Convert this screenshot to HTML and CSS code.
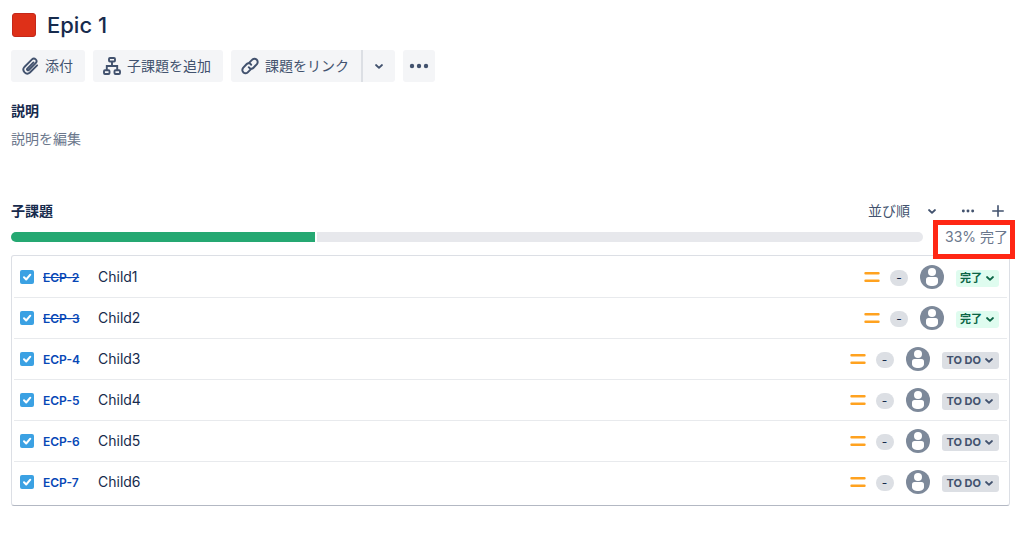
FILE: index.html
```html
<!DOCTYPE html>
<html lang="ja">
<head>
<meta charset="utf-8">
<title>Epic 1</title>
<link rel="stylesheet" href="styles.css">
</head>
<body>
<svg class="sprite" aria-hidden="true">
  <symbol id="chevron" viewBox="0 0 12 12"><path d="M3 5 6 7.800 9 5" fill="none" stroke="currentColor" stroke-width="1.800" stroke-linecap="round" stroke-linejoin="round"/></symbol>
  <symbol id="dots" viewBox="0 0 20 6"><circle cx="3" cy="3" r="2.2"/><circle cx="10" cy="3" r="2.2"/><circle cx="17" cy="3" r="2.2"/></symbol>
  <symbol id="medium" viewBox="0 0 16 12"><path d="M1.500 2.200h13M1.500 9.800h13" stroke="#ffa21f" stroke-width="2.400" stroke-linecap="round"/></symbol>
  <symbol id="person" viewBox="0 0 24 24"><circle cx="12" cy="12" r="12" fill="#7d899a"/><circle cx="12" cy="7" r="4" fill="#fff"/><path d="M6 14.500a2.500 2.500 0 0 1 2.500-2.500h7a2.500 2.500 0 0 1 2.500 2.500v2.500c0 2.800-2.800 4-6 4s-6-1.200-6-4z" fill="#fff"/></symbol>
</svg>
<main class="page">
  <header class="title-row">
    <span class="epic-mark"></span>
    <h1 class="title">Epic 1</h1>
  </header>

  <div class="toolbar">
    <button class="btn" type="button">
      <svg class="btn-icon" viewBox="0 0 18 18"><path d="M12.500 5.400 6.300 11.600a.9.900 0 0 0 1.500 1.400l6.900-6.900a2.600 2.600 0 0 0-3.700-3.700L3.400 10a3.900 3.900 0 0 0 5.500 5.500l7.200-7.200" fill="none" stroke="currentColor" stroke-width="1.900" stroke-linecap="round" stroke-linejoin="round"/></svg>
      添付
    </button>
    <button class="btn" type="button">
      <svg class="btn-icon" viewBox="0 0 18 18" fill="none" stroke="currentColor" stroke-width="1.900"><rect x="6" y="1" width="6" height="3.500" rx="1"/><rect x="1" y="13.200" width="5.500" height="3.800" rx="1"/><rect x="11.500" y="13.200" width="5.500" height="3.800" rx="1"/><path d="M9 4.500V9M3.800 13V9h10.400v4"/></svg>
      子課題を追加
    </button>
    <div class="split">
      <button class="btn split-main" type="button">
        <svg class="btn-icon" viewBox="0 0 18 18" fill="none" stroke="currentColor" stroke-width="2" stroke-linecap="round"><path d="M8.300 5.600 11 2.900a3 3 0 0 1 4.900 4.200l-3.400 3.600a3 3 0 0 1-4.700-.4"/><path d="M9.700 12.400 7 15.100a3 3 0 0 1-4.900-4.200l3.400-3.600a3 3 0 0 1 4.700.4"/></svg>
        課題をリンク
      </button>
      <button class="btn split-more" type="button" aria-label="リンクのオプション"><svg class="chevron"><use href="#chevron"/></svg></button>
    </div>
    <button class="btn icon-btn" type="button" aria-label="その他"><svg class="dots-lg"><use href="#dots"/></svg></button>
  </div>

  <section class="description">
    <h2 class="heading">説明</h2>
    <p class="placeholder">説明を編集</p>
  </section>

  <section class="children">
    <div class="children-head">
      <h2 class="heading">子課題</h2>
      <div class="actions">
        <button class="plain sort" type="button">並び順 <svg class="chevron"><use href="#chevron"/></svg></button>
        <button class="plain" type="button" aria-label="その他の操作"><svg class="dots-sm"><use href="#dots"/></svg></button>
        <button class="plain" type="button" aria-label="子課題を作成"><svg class="plus" viewBox="0 0 12 12"><path d="M6 .8v10.400M.8 6h10.400" stroke="currentColor" stroke-width="1.600" stroke-linecap="round"/></svg></button>
      </div>
    </div>
    <div class="progress-row">
      <div class="progress"><span class="done" style="width:33.3%"></span><span class="rest"></span></div>
      <span class="percent">33% 完了</span>
    </div>

    <ul class="list">
      <li class="row">
        <input class="check" type="checkbox" checked aria-label="ECP-2"><a class="key closed" href="#ecp-2">ECP-2</a><span class="name">Child1</span>
        <svg class="priority"><use href="#medium"/></svg><span class="estimate">-</span><svg class="avatar"><use href="#person"/></svg>
        <button class="status green" type="button">完了<svg class="chevron"><use href="#chevron"/></svg></button>
      </li>
      <li class="row">
        <input class="check" type="checkbox" checked aria-label="ECP-3"><a class="key closed" href="#ecp-3">ECP-3</a><span class="name">Child2</span>
        <svg class="priority"><use href="#medium"/></svg><span class="estimate">-</span><svg class="avatar"><use href="#person"/></svg>
        <button class="status green" type="button">完了<svg class="chevron"><use href="#chevron"/></svg></button>
      </li>
      <li class="row">
        <input class="check" type="checkbox" checked aria-label="ECP-4"><a class="key" href="#ecp-4">ECP-4</a><span class="name">Child3</span>
        <svg class="priority"><use href="#medium"/></svg><span class="estimate">-</span><svg class="avatar"><use href="#person"/></svg>
        <button class="status" type="button">TO DO<svg class="chevron"><use href="#chevron"/></svg></button>
      </li>
      <li class="row">
        <input class="check" type="checkbox" checked aria-label="ECP-5"><a class="key" href="#ecp-5">ECP-5</a><span class="name">Child4</span>
        <svg class="priority"><use href="#medium"/></svg><span class="estimate">-</span><svg class="avatar"><use href="#person"/></svg>
        <button class="status" type="button">TO DO<svg class="chevron"><use href="#chevron"/></svg></button>
      </li>
      <li class="row">
        <input class="check" type="checkbox" checked aria-label="ECP-6"><a class="key" href="#ecp-6">ECP-6</a><span class="name">Child5</span>
        <svg class="priority"><use href="#medium"/></svg><span class="estimate">-</span><svg class="avatar"><use href="#person"/></svg>
        <button class="status" type="button">TO DO<svg class="chevron"><use href="#chevron"/></svg></button>
      </li>
      <li class="row">
        <input class="check" type="checkbox" checked aria-label="ECP-7"><a class="key" href="#ecp-7">ECP-7</a><span class="name">Child6</span>
        <svg class="priority"><use href="#medium"/></svg><span class="estimate">-</span><svg class="avatar"><use href="#person"/></svg>
        <button class="status" type="button">TO DO<svg class="chevron"><use href="#chevron"/></svg></button>
      </li>
    </ul>
  </section>
</main>
</body>
</html>
```
FILE: styles.css
```css
* { box-sizing: border-box; }

body {
  margin: 0;
  background: #fff;
  color: #172b4d;
  font: 14px/20px Inter, "Noto Sans CJK JP", sans-serif;
}

button {
  border: 0;
  font: inherit;
  color: inherit;
  cursor: pointer;
}

svg { flex: none; fill: currentColor; }
.sprite { position: absolute; width: 0; height: 0; }

.page { padding: 10px 26px 32px 11px; }

.title-row {
  display: flex;
  align-items: center;
  gap: 11px;
  height: 30px;
  padding-left: 1px;
}
.epic-mark {
  width: 24px;
  height: 24px;
  border: 1px solid #c4281a;
  border-radius: 3px;
  background: #de3018;
}
.title {
  margin: 0;
  font-size: 22px;
  line-height: 28px;
  font-weight: 500;
}

.toolbar {
  display: flex;
  gap: 8px;
  margin-top: 10px;
  color: #42526e;
}
.btn {
  display: flex;
  align-items: center;
  justify-content: center;
  gap: 6px;
  height: 32px;
  padding: 0 12px 0 10px;
  border-radius: 3px;
  background: #f4f5f7;
}
.btn-icon { width: 18px; height: 18px; fill: none; }
.split { display: flex; }
.split-main { border-radius: 3px 0 0 3px; }
.split-more {
  width: 34px;
  padding: 0;
  border-left: 2px solid #dcdfe4;
  border-radius: 0 3px 3px 0;
}
.icon-btn { width: 32px; padding: 0; }
.chevron { width: 12px; height: 12px; }
.dots-lg { width: 20px; height: 6px; }

.description { margin-top: 19px; }
.heading {
  margin: 0;
  font-size: 14px;
  line-height: 20px;
  font-weight: 700;
}
.placeholder { margin: 8px 0 0; color: #6b778c; }

.children { margin-top: 52px; }
.children-head { display: flex; justify-content: space-between; }
.actions {
  display: flex;
  align-items: center;
  gap: 17px;
  padding-right: 6px;
  color: #42526e;
}
.plain {
  display: flex;
  align-items: center;
  height: 20px;
  padding: 0;
  background: none;
}
.sort { gap: 16px; margin-right: 6px; }
.dots-sm { width: 14px; height: 4px; }
.plus { width: 12px; height: 12px; }

.progress-row {
  display: flex;
  align-items: flex-start;
  gap: 10px;
  height: 34px;
}
.progress {
  display: flex;
  flex: 1;
  gap: 2px;
  height: 10px;
  margin-top: 11px;
  overflow: hidden;
  border-radius: 5px;
}
.done { background: #25a872; }
.rest { flex: 1; background: #e7e8ec; }
.percent {
  z-index: 1;
  height: 39px;
  margin: -1px -5px 0 0;
  padding: 2px 2px 0 7px;
  border: 5px solid #ff2714;
  background: #fff;
  color: #6b778c;
  white-space: nowrap;
}

.list {
  margin: 0;
  padding: 1px 2px 2px;
  border: 1px solid #dcdfe5;
  border-bottom-color: #b3b8c3;
  border-radius: 3px;
  list-style: none;
}
.row {
  display: flex;
  align-items: center;
  height: 41px;
  padding: 0 8px 0 6px;
  border-bottom: 1px solid #e8eaed;
}
.row:last-child { border-bottom-color: transparent; }
.check {
  appearance: none;
  width: 14px;
  height: 14px;
  margin: 0 9px 0 0;
  border-radius: 2px;
  background: #fff;
  border: 1px solid #3ba1e3;
}
.check:checked {
  border: 0;
  background: #3ba1e3 url("data:image/svg+xml,%3Csvg xmlns='http://www.w3.org/2000/svg' viewBox='0 0 14 14'%3E%3Cpath d='M4 7.300 6.200 9.500 10.300 4.700' fill='none' stroke='white' stroke-width='2' stroke-linecap='round' stroke-linejoin='round'/%3E%3C/svg%3E") center / contain;
}
.key {
  width: 55px;
  padding-top: 1px;
  color: #0747b6;
  font-size: 12px;
  font-weight: 600;
  text-decoration: none;
}
.closed { text-decoration: line-through; }
.name { flex: 1; }
.priority { width: 16px; height: 12px; }
.estimate {
  width: 18px;
  height: 16px;
  margin: 2px 12px 0 10px;
  border-radius: 8px;
  background: #dcdfe4;
  font-size: 12px;
  line-height: 16px;
  text-align: center;
}
.avatar { width: 24px; height: 24px; }
.status {
  display: flex;
  align-items: center;
  gap: 2px;
  height: 17px;
  margin: 2px 0 0 12px;
  padding: 0 4px 0 5px;
  border-radius: 3px;
  background: #dcdfe4;
  color: #42526e;
  font-size: 11px;
  line-height: 16px;
  font-weight: 700;
}
.green {
  padding: 0 3px 0 4px;
  background: #dffcef;
  color: #0b6545;
}
```
